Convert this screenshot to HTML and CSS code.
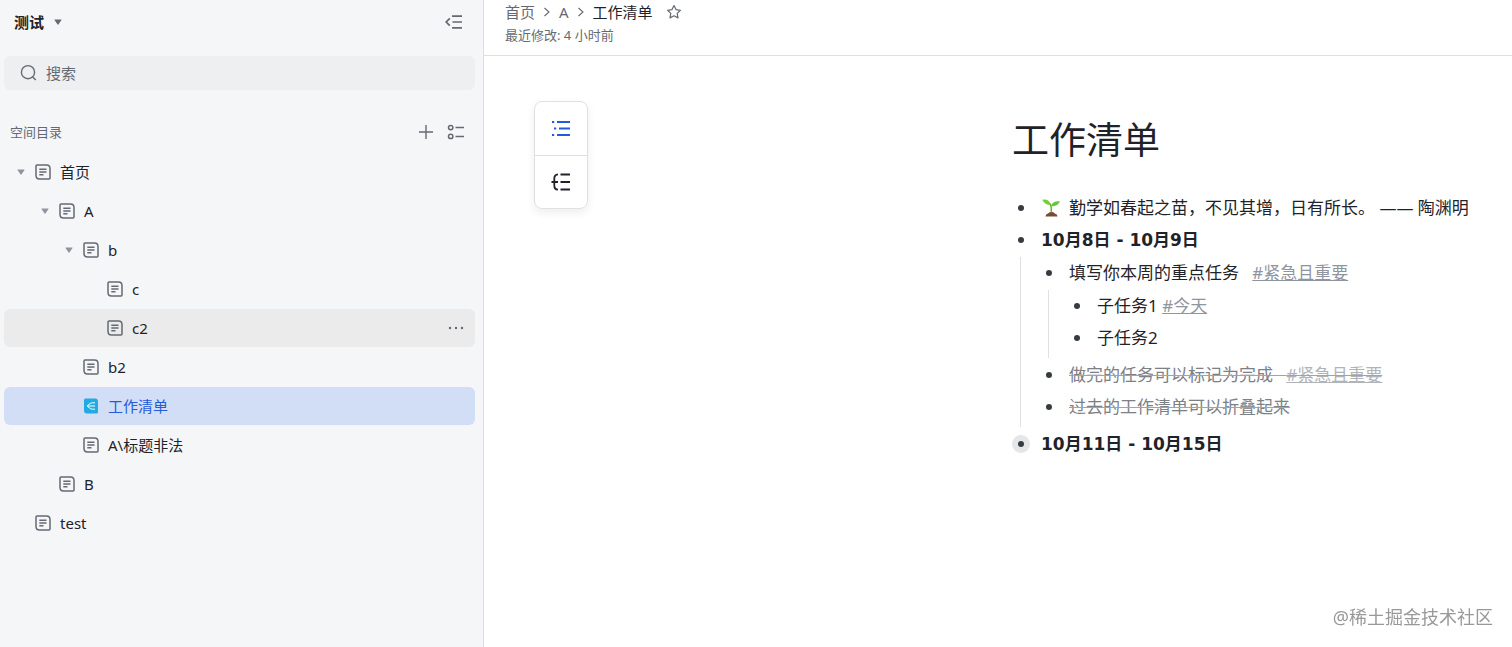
FILE: index.html
```html
<!DOCTYPE html>
<html lang="zh-CN">
<head>
  <meta charset="utf-8">
  <title>工作清单</title>
  <link rel="stylesheet" href="styles.css">
</head>
<body>
  <svg class="sprite" aria-hidden="true">
    <symbol id="icon-doc" viewBox="0 0 16 16">
      <path d="M2 1h9.500Q15 1 15 4.500V14q0 1-1 1H4.500Q1 15 1 11.500V2Q1 1 2 1z" fill="none" stroke="currentColor" stroke-width="1.500"/>
      <path d="M4.300 5.200h7.200M4.300 8h7.200M4.300 10.800h4.200" fill="none" stroke="currentColor" stroke-width="1.400"/>
    </symbol>
    <symbol id="icon-caret" viewBox="0 0 10 10">
      <path d="M1.800 2.500h6.400q.6 0 .3.500L5.400 7.500q-.4.500-.8 0L1.500 3q-.3-.5.3-.5z" fill="currentColor"/>
    </symbol>
    <symbol id="icon-next" viewBox="0 0 8 10">
      <path d="M1.500 1l4.500 4-4.500 4" fill="none" stroke="currentColor" stroke-width="1.100"/>
    </symbol>
  </svg>

  <div class="app">
    <aside class="sidebar">
      <div class="sidebar-header">
        <button class="space-btn">测试 <svg class="caret"><use href="#icon-caret"/></svg></button>
        <button class="icon-btn" aria-label="收起">
          <svg width="18" height="18" viewBox="0 0 18 18" fill="none" stroke="currentColor" stroke-width="1.700"><path d="M4.800 5.300L1.200 9l3.600 3.700M7 3.200h10M7.500 9H17M7 14.800h10"/></svg>
        </button>
      </div>

      <label class="search">
        <svg width="18" height="18" viewBox="0 0 18 18" fill="none" stroke="currentColor" stroke-width="1.400"><circle cx="8" cy="8.200" r="6.600"/><path d="M12.700 12.900l3.100 3.100"/></svg>
        <input type="text" placeholder="搜索" aria-label="搜索">
      </label>

      <div class="dir-header">
        <span>空间目录</span>
        <div class="dir-actions">
          <button class="icon-btn" aria-label="新建">
            <svg width="18" height="18" viewBox="0 0 18 18" fill="none" stroke="currentColor" stroke-width="1.400"><path d="M9 2v14M2 9h14"/></svg>
          </button>
          <button class="icon-btn" aria-label="目录选项">
            <svg width="18" height="18" viewBox="0 0 18 18" fill="none" stroke="currentColor" stroke-width="1.500"><circle cx="3.700" cy="4.600" r="2.200"/><circle cx="3.700" cy="13.400" r="2.200"/><path d="M8.500 4.600H17M8.500 13.400H17"/></svg>
          </button>
        </div>
      </div>

      <nav class="tree">
        <a href="#" class="node level-1"><svg class="caret"><use href="#icon-caret"/></svg><svg class="doc"><use href="#icon-doc"/></svg><span>首页</span></a>
        <a href="#" class="node level-2"><svg class="caret"><use href="#icon-caret"/></svg><svg class="doc"><use href="#icon-doc"/></svg><span>A</span></a>
        <a href="#" class="node level-3"><svg class="caret"><use href="#icon-caret"/></svg><svg class="doc"><use href="#icon-doc"/></svg><span>b</span></a>
        <a href="#" class="node level-4"><i class="caret"></i><svg class="doc"><use href="#icon-doc"/></svg><span>c</span></a>
        <div class="node level-4 hovered">
          <i class="caret"></i><svg class="doc"><use href="#icon-doc"/></svg><a href="#">c2</a>
          <button class="icon-btn more" aria-label="更多">
            <svg width="18" height="18" viewBox="0 0 18 18" fill="currentColor"><circle cx="3" cy="9" r="1.200"/><circle cx="9" cy="9" r="1.200"/><circle cx="15" cy="9" r="1.200"/></svg>
          </button>
        </div>
        <a href="#" class="node level-3"><i class="caret"></i><svg class="doc"><use href="#icon-doc"/></svg><span>b2</span></a>
        <a href="#" class="node level-3 active"><i class="caret"></i><svg class="doc" viewBox="0 0 16 16"><path d="M2.500.5h9.500q3 0 3 3v10.500q0 1.500-1.500 1.500H4q-3 0-3-3V2Q1 .5 2.500.5z" fill="#22aae2"/><path d="M12 4.800H9.500Q7.500 4.800 6 6.400L4.200 8 6 9.600q1.500 1.600 3.500 1.600H12M4.200 8H12" fill="none" stroke="#fff"/></svg><span>工作清单</span></a>
        <a href="#" class="node level-3"><i class="caret"></i><svg class="doc"><use href="#icon-doc"/></svg><span>A\标题非法</span></a>
        <a href="#" class="node level-2"><i class="caret"></i><svg class="doc"><use href="#icon-doc"/></svg><span>B</span></a>
        <a href="#" class="node level-1"><i class="caret"></i><svg class="doc"><use href="#icon-doc"/></svg><span>test</span></a>
      </nav>
    </aside>

    <main class="main">
      <header class="topbar">
        <nav class="breadcrumb">
          <a href="#">首页</a>
          <svg class="next"><use href="#icon-next"/></svg>
          <a href="#">A</a>
          <svg class="next"><use href="#icon-next"/></svg>
          <a href="#" class="current">工作清单</a>
          <button class="icon-btn star" aria-label="收藏">
            <svg width="16" height="16" viewBox="0 0 16 16" fill="none" stroke="currentColor" stroke-width="1.200" stroke-linejoin="round"><path d="M8 1.600l2 4 4.400.7-3.200 3.100.8 4.500L8 11.800l-4 2.100.8-4.500L1.600 6.300 6 5.600z"/></svg>
          </button>
        </nav>
        <div class="modified">最近修改: 4 小时前</div>
      </header>

      <div class="content">
        <div class="view-switch">
          <button class="view-btn selected" aria-label="大纲视图">
            <svg width="20" height="20" viewBox="0 0 20 20" fill="none" stroke="currentColor" stroke-width="1.800"><path d="M1 3h2.200M6 3h13M3 9.500h2.200M8 9.500h11M1 16h2.200M6 16h13"/></svg>
          </button>
          <button class="view-btn" aria-label="导图视图">
            <svg width="20" height="20" viewBox="0 0 20 20" fill="none" stroke="currentColor" stroke-width="1.800"><path d="M7 2.300Q3.300 2.600 3.300 6.500v7q0 3.900 3.700 4.200M.5 10H7M9.500 2.500H19M9.500 10H19M9.500 17.500H19"/></svg>
          </button>
        </div>

        <article class="doc-body">
          <h1>工作清单</h1>
          <ul class="outline">
            <li>
              <div class="item"><span class="bullet"></span><p><svg class="sprout" viewBox="0 0 20 20" role="img" aria-label="幼苗"><path d="M4.500 18.500q0-2.500 2.500-3 1.500-1.700 3.500-1.700t3.300 1.700q2.700.5 2.700 3z" fill="#7a4a38"/><path d="M10.300 14.500Q10.800 10 9.300 5.500" fill="none" stroke="#66b42c" stroke-width="1.500"/><path d="M9.800 6.800Q4 7.500 1.200 1.800 8 .5 9.800 6.800z" fill="#78cf34"/><path d="M10 8Q11.500 2.500 19 3.300 16.500 9.200 10 8z" fill="#68c63a"/></svg>勤学如春起之苗，不见其增，日有所长。 —— 陶渊明</p></div>
            </li>
            <li>
              <div class="item date"><span class="bullet"></span><p>10月8日 - 10月9日</p></div>
              <ul>
                <li>
                  <div class="item"><span class="bullet"></span><p>填写你本周的重点任务&nbsp;&nbsp; <a href="#" class="tag">#紧急且重要</a></p></div>
                  <ul>
                    <li><div class="item"><span class="bullet"></span><p>子任务1 <a href="#" class="tag">#今天</a></p></div></li>
                    <li><div class="item"><span class="bullet"></span><p>子任务2</p></div></li>
                  </ul>
                </li>
                <li><div class="item done"><span class="bullet"></span><p>做完的任务可以标记为完成&nbsp;&nbsp; <a href="#" class="tag">#紧急且重要</a></p></div></li>
                <li><div class="item done"><span class="bullet"></span><p>过去的工作清单可以折叠起来</p></div></li>
              </ul>
            </li>
            <li>
              <div class="item date collapsed"><span class="bullet"></span><p>10月11日 - 10月15日</p></div>
            </li>
          </ul>
        </article>
      </div>
    </main>
  </div>

  <div class="watermark">@稀土掘金技术社区</div>
</body>
</html>
```

FILE: styles.css
```css
* {
  box-sizing: border-box;
}

body {
  margin: 0;
  font-family: "Noto Sans", "Noto Sans CJK SC", sans-serif;
  font-size: 15px;
  line-height: 24px;
  color: #1f2329;
  background: #fff;
}

a {
  color: inherit;
  text-decoration: none;
}

button {
  padding: 0;
  border: none;
  background: none;
  font: inherit;
  color: inherit;
  cursor: pointer;
}

svg {
  display: block;
}

.sprite {
  position: absolute;
  width: 0;
  height: 0;
}

.app {
  display: flex;
  min-height: 100vh;
}

/* sidebar */
.sidebar {
  flex: 0 0 484px;
  padding: 0 8px 0 4px;
  background: #f4f6f8;
  border-right: 1px solid #dcdee1;
}

.sidebar-header {
  display: flex;
  align-items: center;
  justify-content: space-between;
  height: 44px;
  padding: 0 12px 0 10px;
}

.space-btn {
  display: flex;
  align-items: center;
  gap: 9px;
  font-weight: 700;
}

.icon-btn {
  color: #646a73;
}

.caret {
  flex: none;
  width: 10px;
  height: 10px;
  color: #646a73;
}

.search {
  display: flex;
  align-items: center;
  gap: 8px;
  height: 34px;
  margin-top: 12px;
  padding: 0 16px;
  border-radius: 6px;
  background: #eeeff1;
  color: #646a73;
}

.search input {
  flex: 1;
  padding: 0;
  border: none;
  outline: none;
  background: none;
  font: inherit;
}

.search input::placeholder {
  color: #646a73;
}

.dir-header {
  display: flex;
  align-items: center;
  justify-content: space-between;
  height: 40px;
  margin-top: 22px;
  padding: 0 10px 0 6px;
  font-size: 13px;
  color: #646a73;
}

.dir-actions {
  display: flex;
  gap: 12px;
}

.tree {
  display: flex;
  flex-direction: column;
  gap: 1px;
  padding-top: 1px;
}

.node {
  display: flex;
  align-items: center;
  gap: 9px;
  height: 38px;
  padding: 0 10px 0 12px;
  border-radius: 6px;
}

.node .caret {
  color: #8f959e;
}

.node .doc {
  flex: none;
  width: 16px;
  height: 16px;
  color: #646a73;
}

.level-2 {
  padding-left: 36px;
}

.level-3 {
  padding-left: 60px;
}

.level-4 {
  padding-left: 84px;
}

.hovered {
  background: #ebebeb;
}

.active {
  background: #d2def5;
  color: #245bdb;
}

.more {
  margin-left: auto;
}

/* top bar */
.main {
  flex: 1;
  min-width: 0;
}

.topbar {
  height: 56px;
  padding-left: 21px;
  border-bottom: 1px solid #dee0e3;
  color: #646a73;
}

.breadcrumb {
  display: flex;
  align-items: center;
  gap: 8px;
}

.next {
  width: 8px;
  height: 10px;
}

.current {
  color: #1f2329;
}

.star {
  margin-left: 5px;
}

.modified {
  font-size: 13px;
  line-height: 22px;
}

/* document */
.content {
  display: flex;
  align-items: flex-start;
  justify-content: space-between;
  padding: 45px 32px 45px 50px;
}

.view-switch {
  width: 54px;
  border: 1px solid #dee0e3;
  border-radius: 8px;
  box-shadow: 0 4px 8px rgba(31, 35, 41, 0.08);
}

.view-btn {
  display: flex;
  align-items: center;
  justify-content: center;
  width: 100%;
  height: 53px;
}

.view-btn + .view-btn {
  border-top: 1px solid #dee0e3;
}

.selected {
  color: #245bdb;
}

.doc-body {
  width: 468px;
  padding-top: 11px;
}

h1 {
  margin: 0 0 24px;
  font-size: 37px;
  font-weight: 400;
  line-height: 56px;
}

.outline,
.outline ul {
  margin: 0;
  padding: 0;
  list-style: none;
}

.outline {
  font-size: 17px;
  line-height: 32px;
}

.outline ul {
  margin: 1px 0 1px 8px;
  padding: 0 0 4px 19px;
  border-left: 1px solid #dee0e3;
}

.item {
  display: flex;
  align-items: center;
  gap: 11px;
}

.item p {
  margin: 0;
  white-space: nowrap;
}

.bullet {
  display: flex;
  align-items: center;
  justify-content: center;
  flex: none;
  width: 18px;
  height: 18px;
  border-radius: 50%;
}

.bullet::before {
  content: "";
  width: 6px;
  height: 6px;
  border-radius: 50%;
  background: #373c43;
}

.collapsed .bullet {
  background: #e5e6e8;
}

.date {
  font-family: "DejaVu Sans", "Noto Sans CJK SC", sans-serif;
  font-weight: 700;
}

.tag {
  color: #8f959e;
  text-decoration: underline;
}

.done {
  color: #7c8087;
}

.done p {
  text-decoration: line-through 1px #a0a3a8;
}

.done .tag {
  color: #b0b3b8;
}

.sprout {
  display: inline-block;
  width: 20px;
  height: 20px;
  margin-right: 8px;
  vertical-align: -4px;
}

.watermark {
  position: fixed;
  right: 19px;
  bottom: 18px;
  font-size: 18px;
  color: #999;
}
```
